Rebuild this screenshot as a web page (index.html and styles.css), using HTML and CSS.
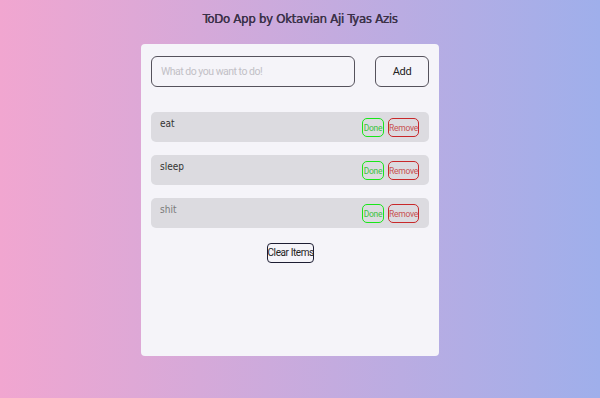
FILE: index.html
```html
<!DOCTYPE html>
<html lang="en">

<head>
    <meta charset="UTF-8">
    <meta name="viewport" content="width=device-width, initial-scale=1.0">
    <title>ToDo App</title>
    <link rel="stylesheet" href="styles.css">
</head>

<body>
    <h1 class="title">ToDo App by Oktavian Aji Tyas Azis</h1>
    <div class="card">
        <div class="form">
            <input class="todo-input" type="text" placeholder="What do you want to do!">
            <button class="add-btn">Add</button>
        </div>
        <ul class="list">
            <li class="item">
                <span class="item-text">eat</span>
                <div class="actions">
                    <button class="done-btn">Done</button>
                    <button class="remove-btn">Remove</button>
                </div>
            </li>
            <li class="item">
                <span class="item-text">sleep</span>
                <div class="actions">
                    <button class="done-btn">Done</button>
                    <button class="remove-btn">Remove</button>
                </div>
            </li>
            <li class="item">
                <span class="item-text faded">shit</span>
                <div class="actions">
                    <button class="done-btn">Done</button>
                    <button class="remove-btn">Remove</button>
                </div>
            </li>
        </ul>
        <div class="footer">
            <button class="clear-btn">Clear Items</button>
        </div>
    </div>
</body>

</html>
```

FILE: styles.css
```css
* {
    margin: 0;
    padding: 0;
    box-sizing: border-box;
}

body {
    height: 398px;
    background: linear-gradient(to right, #f1a6d0, #9fafeb);
    font-family: "Roboto", "Liberation Sans", sans-serif;
    overflow: hidden;
}

h1.title {
    padding-top: 11px;
    height: 44px;
    text-align: center;
    font-family: "DejaVu Sans Condensed", "DejaVu Sans", sans-serif;
    font-size: 13px;
    font-weight: normal;
    letter-spacing: -0.25px;
    color: #3a3048;
    text-shadow: 0.4px 0 0 #3a3048;
}

.card {
    width: 298px;
    height: 312px;
    margin-left: 141px;
    background: #f5f4f9;
    border-radius: 4px;
    padding: 12px 10px;
}

.form {
    display: flex;
    justify-content: space-between;
}

.todo-input {
    width: 204px;
    height: 31px;
    border: 1px solid #55525c;
    border-radius: 6px;
    background: transparent;
    padding: 0 9px;
    font-family: inherit;
    font-size: 10.5px;
    letter-spacing: -0.5px;
    outline: none;
}

.todo-input::placeholder {
    color: #c2c0c6;
}

.add-btn {
    width: 54px;
    height: 31px;
    border: 1px solid #55525c;
    border-radius: 6px;
    background: transparent;
    font-family: inherit;
    font-size: 11px;
    letter-spacing: -0.3px;
    color: #222;
}

.list {
    list-style: none;
    margin-top: 25px;
}

.item {
    display: flex;
    justify-content: space-between;
    height: 30px;
    margin-bottom: 13px;
    padding: 6px 10px 0 9px;
    background: #dcdbe0;
    border-radius: 5px;
}

.item-text {
    font-family: "DejaVu Sans Condensed", "DejaVu Sans", sans-serif;
    font-size: 10px;
    color: #333;
}

.item-text.faded {
    color: #7a7a7a;
}

.actions {
    display: flex;
    gap: 4px;
}

.actions button {
    height: 19px;
    border-radius: 5px;
    background: transparent;
    font-family: inherit;
    font-size: 8.5px;
    letter-spacing: -0.3px;
    padding: 0;
    white-space: nowrap;
}

.done-btn {
    width: 22px;
    border: 1px solid #19e619;
    color: #3cc43c;
}

.remove-btn {
    width: 31px;
    border: 1px solid #c8282a;
    color: #c85050;
}

.footer {
    text-align: center;
}

.clear-btn {
    width: 47px;
    height: 20px;
    border: 1px solid #1d1d33;
    border-radius: 4px;
    background: transparent;
    font-family: inherit;
    font-size: 10px;
    letter-spacing: -0.4px;
    white-space: nowrap;
    padding: 0;
    color: #222;
}
```
